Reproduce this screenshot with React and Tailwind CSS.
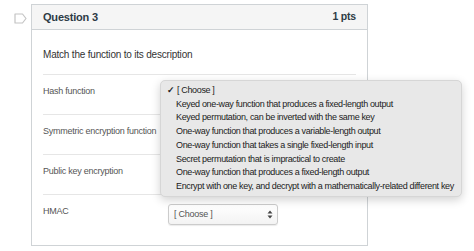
const options = [
  'Keyed one-way function that produces a fixed-length output',
  'Keyed permutation, can be inverted with the same key',
  'One-way function that produces a variable-length output',
  'One-way function that takes a single fixed-length input',
  'Secret permutation that is impractical to create',
  'One-way function that produces a fixed-length output',
  'Encrypt with one key, and decrypt with a mathematically-related different key',
];

const rows = ['Hash function', 'Symmetric encryption function', 'Public key encryption', 'HMAC'];

const BookmarkIcon = () => (
  <svg width="13" height="11" viewBox="0 0 13 11" fill="none" stroke="#c4c4c4" strokeWidth="1.2">
    <path d="M1 1h7.5l3.5 4.5-3.5 4.5H1z" strokeLinejoin="round" />
  </svg>
);

export default function App() {
  return (
    <div className="relative w-[474px] h-[251px] bg-white overflow-hidden font-['Liberation_Sans',Arial,sans-serif]">
      <div className="flex items-start pt-[4px]">
        <div className="w-[31px] flex justify-center pt-[9px] pl-[10px]">
          <BookmarkIcon />
        </div>
        <div className="w-[337px] border border-[#cfd3d6] h-[242px]">
          <div className="h-[25px] bg-[#f5f5f5] border-b border-[#cfd3d6] flex items-center justify-between pl-[11px] pr-[11px]">
            <span className="text-[11px] font-bold tracking-[-0.2px] text-[#2d3b45]">Question 3</span>
            <span className="text-[10.5px] font-bold tracking-[-0.2px] text-[#2d3b45]">1 pts</span>
          </div>
          <div className="px-[11px]">
            <p className="text-[10px] tracking-[-0.2px] text-[#333] leading-[13px] pt-[18px] pb-[13px]">Match the function to its description</p>
            {rows.map((r, i) => (
              <div key={r} className={`border-t border-[#e6e6e6] h-[40px] pt-[10px] text-[9px] tracking-[-0.25px] leading-[13px] text-[#555] ${i === 3 ? 'flex' : ''}`}>
                <span className={i === 3 ? 'w-[125px]' : ''}>{r}</span>
                {i === 3 && (
                  <div className="-mt-[1px] w-[110px] h-[21px] rounded-[3px] border border-[#cccccc] bg-gradient-to-b from-white to-[#f3f3f3] shadow-[0_1px_1px_rgba(0,0,0,0.08)] flex items-center justify-between pl-[5px] pr-[4px]">
                    <span className="text-[9px] tracking-[-0.25px] text-[#555]">[ Choose ]</span>
                    <svg width="6" height="9" viewBox="0 0 6 9" fill="#444">
                      <path d="M3 0.5L5.5 3.5H0.5z M3 8.5L0.5 5.5H5.5z" />
                    </svg>
                  </div>
                )}
              </div>
            ))}
          </div>
        </div>
      </div>
      <div className="absolute left-[160px] top-[80px] w-[302px] h-[117px] rounded-[5px] bg-[#e8e8e8] border border-[#d6d6d6] shadow-[0_3px_10px_rgba(0,0,0,0.18)] pt-[3px] text-[9px] tracking-[-0.35px] text-[#222] leading-[13.7px]">
        <div className="flex items-center pl-[6px]">
          <span className="w-[10px] text-[9px] font-bold tracking-normal">✓</span>
          <span>[ Choose ]</span>
        </div>
        {options.map((o) => (
          <div key={o} className="pl-[15px] whitespace-nowrap">{o}</div>
        ))}
      </div>
    </div>
  );
}
